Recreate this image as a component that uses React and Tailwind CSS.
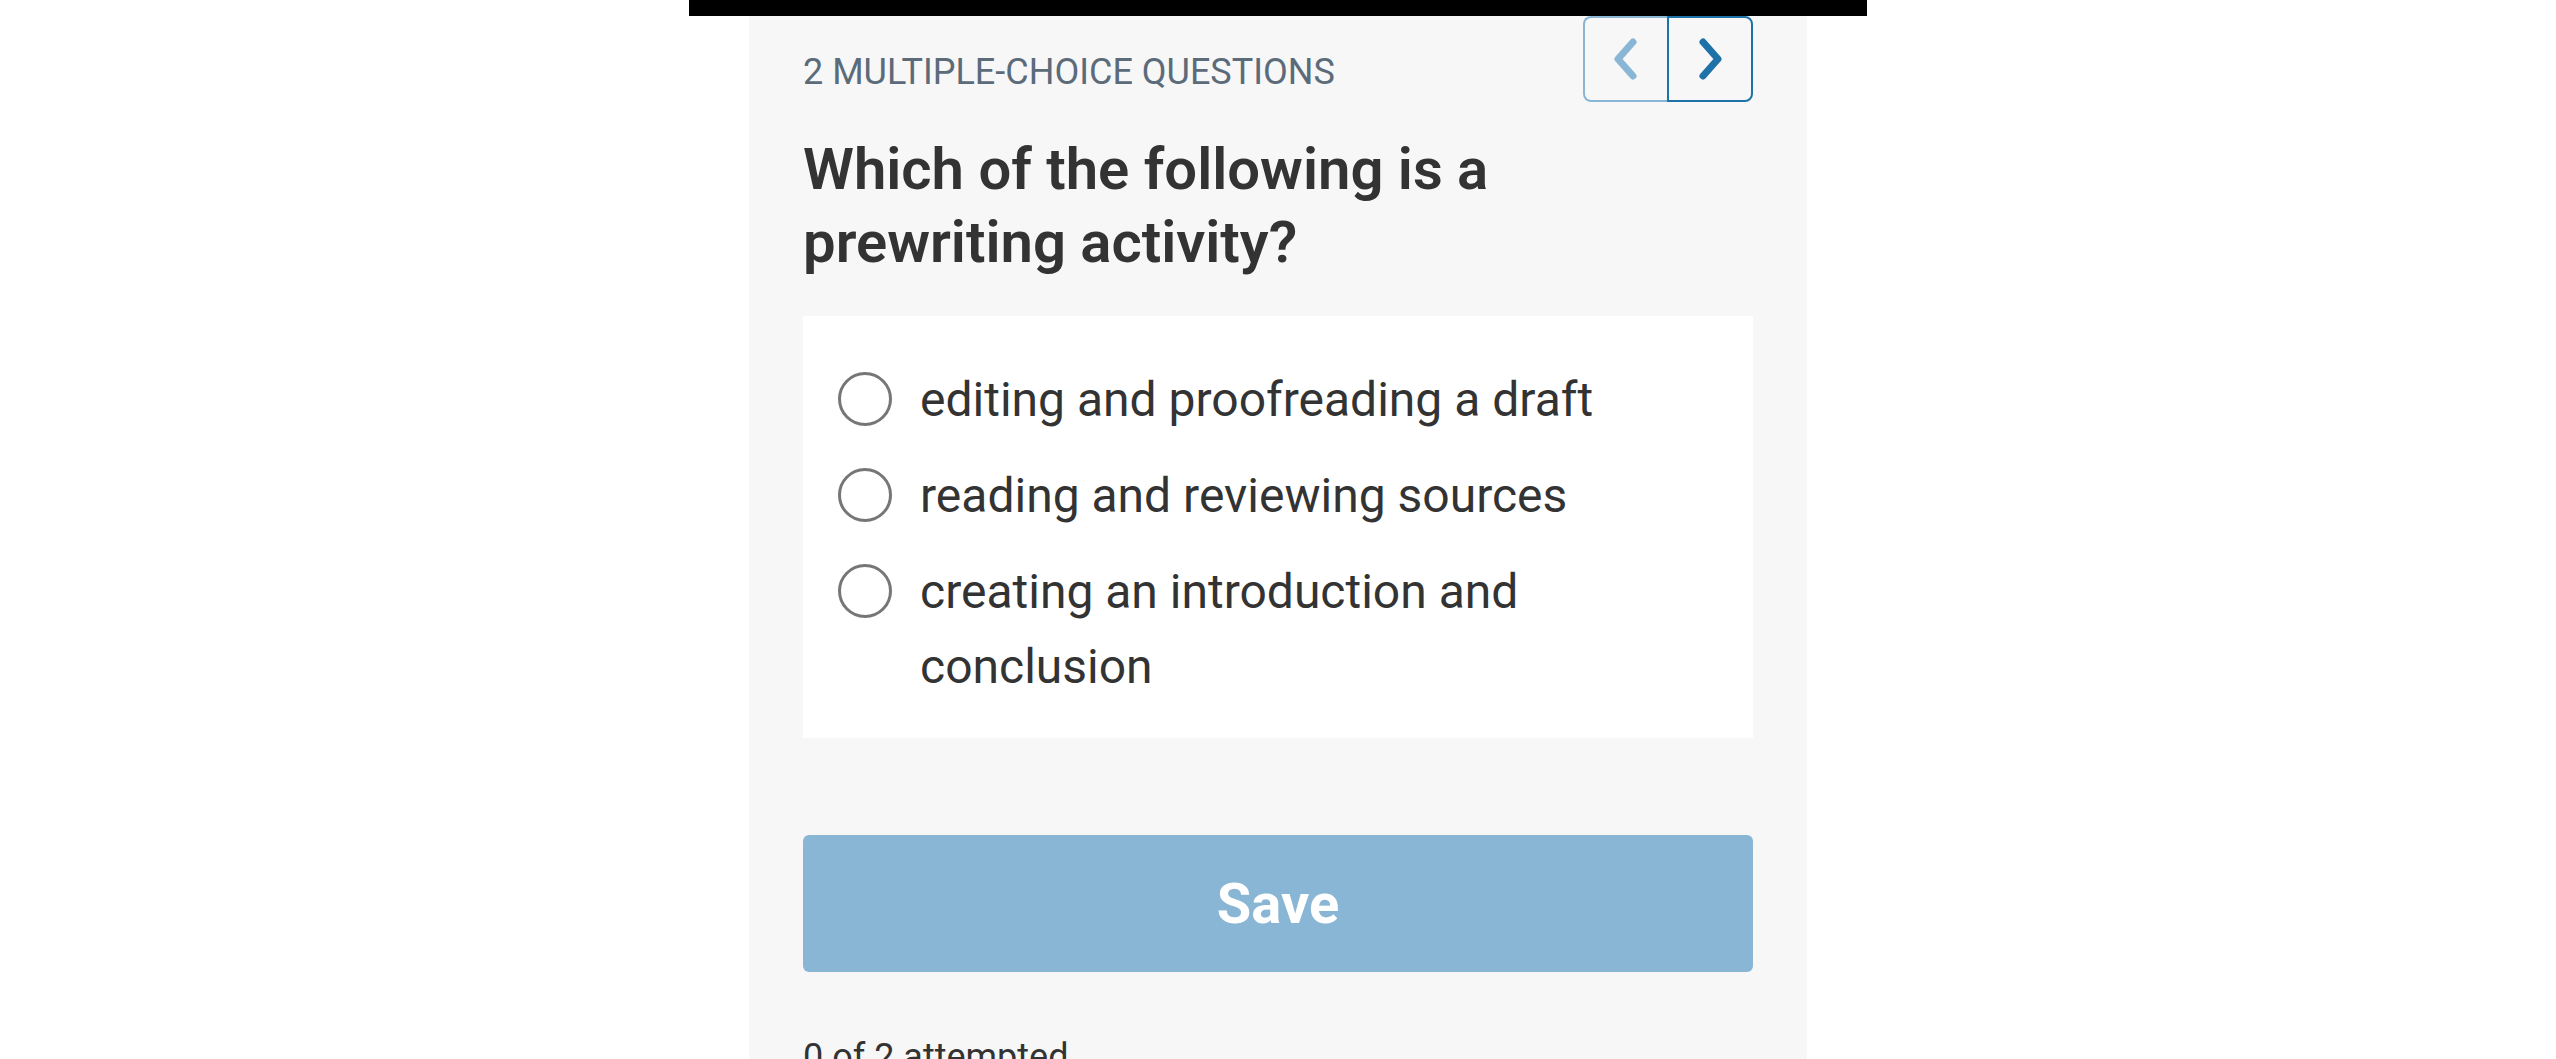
import React from "react";

function Chevron({ dir, color }) {
  return (
    <svg width="30" height="44" viewBox="0 0 30 44" fill="none">
      {dir === "left" ? (
        <polyline points="22,5 7,22 22,39" stroke={color} strokeWidth="7" strokeLinecap="round" strokeLinejoin="round" />
      ) : (
        <polyline points="8,5 23,22 8,39" stroke={color} strokeWidth="7" strokeLinecap="round" strokeLinejoin="round" />
      )}
    </svg>
  );
}

function Option({ text }) {
  return (
    <div className="flex items-start gap-[28px]">
      <div className="mt-[10px] h-[54px] w-[54px] shrink-0 rounded-full border-[3px] border-[#767676] bg-white" />
      <div className="text-[48px] leading-[75px] text-[#333333]">{text}</div>
    </div>
  );
}

export default function App() {
  return (
    <div className="flex min-h-screen flex-col items-center bg-white font-['Roboto',sans-serif]">
      <div className="h-[16px] w-[1178px] bg-black" />
      <div className="flex w-[1058px] flex-1 flex-col bg-[#f7f7f7] px-[54px]">
        <div className="flex items-start justify-between">
          <div className="mt-[32px] text-[36px] leading-[48px] text-[#5b6b7a]">
            2 MULTIPLE-CHOICE QUESTIONS
          </div>
          <div className="flex h-[86px]">
            <button className="flex w-[84px] items-center justify-center rounded-l-[8px] border-y-2 border-l-2 border-[#8ab6d6] bg-[#f7f7f7]">
              <Chevron dir="left" color="#8ab6d6" />
            </button>
            <button className="flex w-[86px] items-center justify-center rounded-r-[8px] border-2 border-[#1f72a8] bg-[#f7f7f7]">
              <Chevron dir="right" color="#1f72a8" />
            </button>
          </div>
        </div>
        <h1 className="mt-[31px] text-[58px] font-semibold leading-[73px] text-[#333333]">
          Which of the following is a
          <br />
          prewriting activity?
        </h1>
        <div className="mt-[37px] flex flex-col gap-[21px] bg-white px-[35px] pb-[34px] pt-[46px]">
          <Option text="editing and proofreading a draft" />
          <Option text="reading and reviewing sources" />
          <Option
            text={
              <>
                creating an introduction and
                <br />
                conclusion
              </>
            }
          />
        </div>
        <button className="mt-[97px] flex h-[137px] items-center justify-center rounded-[6px] bg-[#8ab6d6] text-[56px] font-bold text-white">
          Save
        </button>
        <div className="mt-[58px] text-[36px] leading-[54px] text-[#333333]">0 of 2 attempted</div>
      </div>
    </div>
  );
}
